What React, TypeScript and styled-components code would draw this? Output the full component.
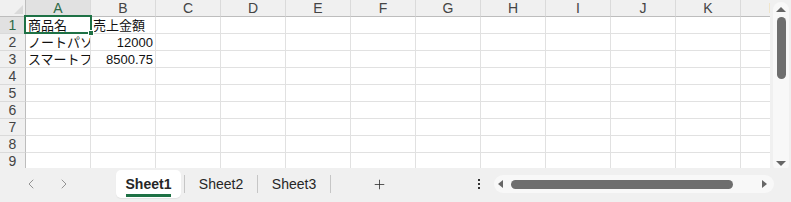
import { FC } from 'react'
import styled, { createGlobalStyle } from 'styled-components'
import { ChevronLeft, ChevronRight, Plus } from 'lucide-react'

const GlobalStyle = createGlobalStyle`
  html, body {
    margin: 0;
    padding: 0;
    background: #ffffff;
  }
  * {
    box-sizing: border-box;
  }
`

const FONT = `"Liberation Sans", "Noto Sans CJK JP", sans-serif`
const GREEN = '#1e7145'
const ROW_H = 17
const COL_W = 65
const HEAD_W = 26

const Workbook = styled.div`
  width: 791px;
  height: 202px;
  display: flex;
  flex-direction: column;
  font-family: ${FONT};
  background: #f0f0f0;
  overflow: hidden;
`

const Main = styled.div`
  display: flex;
  height: 170px;
`

const GridViewport = styled.div`
  position: relative;
  width: 770px;
  height: 170px;
  overflow: hidden;
  background: #ffffff;
`

const Grid = styled.div`
  display: grid;
  grid-template-columns: ${HEAD_W}px repeat(12, ${COL_W}px);
  grid-auto-rows: ${ROW_H}px;
`

const Corner = styled.div`
  position: relative;
  background: #f0f0f0;
  border-right: 1px solid #bdbdbd;
  border-bottom: 1px solid #bdbdbd;

  &::after {
    content: '';
    position: absolute;
    right: 2px;
    bottom: 2px;
    border-left: 9px solid transparent;
    border-bottom: 9px solid #dadada;
  }
`

const ColHeader = styled.div<{ $selected?: boolean }>`
  background: ${({ $selected }) => ($selected ? '#e1e1e1' : '#f0f0f0')};
  color: ${({ $selected }) => ($selected ? '#2d6a47' : '#444444')};
  border-right: 1px solid #dadada;
  border-bottom: 1px solid #bdbdbd;
  font-size: 14px;
  line-height: 16px;
  text-align: center;
`

const RowHeader = styled.div<{ $selected?: boolean }>`
  background: ${({ $selected }) => ($selected ? '#e1e1e1' : '#f0f0f0')};
  color: ${({ $selected }) => ($selected ? '#2d6a47' : '#444444')};
  border-right: 1px solid #bdbdbd;
  border-bottom: 1px solid #dadada;
  font-size: 14px;
  line-height: 17px;
  text-align: center;
`

const Cell = styled.div<{ $align?: 'left' | 'right' }>`
  border-right: 1px solid #e1e1e1;
  border-bottom: 1px solid #e1e1e1;
  font-size: 13px;
  line-height: 17px;
  color: #111111;
  padding: 0 2px;
  white-space: nowrap;
  overflow: hidden;
  text-align: ${({ $align }) => $align ?? 'left'};
`

/* active-cell frame drawn over the grid */
const Selection = styled.div`
  position: absolute;
  z-index: 5;
  border: 2px solid ${GREEN};
  pointer-events: none;
`

const FillHandle = styled.div`
  position: absolute;
  right: -4px;
  bottom: -4px;
  width: 6px;
  height: 6px;
  background: ${GREEN};
  border: 1px solid #ffffff;
`

const VScroll = styled.div`
  width: 21px;
  height: 172px;
  padding: 2px 2px 0 3px;
  background: #f0f0f0;
`

const VTrack = styled.div`
  height: 100%;
  border-radius: 8px;
  background: #f8f8f8;
  display: flex;
  flex-direction: column;
  align-items: center;
  padding: 5px 0 6px;
`

const VThumb = styled.div`
  width: 9px;
  height: 62px;
  margin-top: 5px;
  border-radius: 5px;
  background: #6e6e6e;
`

const Spacer = styled.div`
  flex: 1;
`

const Triangle = styled.div<{ $dir: 'up' | 'down' | 'left' | 'right' }>`
  width: 0;
  height: 0;
  ${({ $dir }) =>
    $dir === 'up'
      ? 'border-left: 5px solid transparent; border-right: 5px solid transparent; border-bottom: 5px solid #666;'
      : $dir === 'down'
        ? 'border-left: 5px solid transparent; border-right: 5px solid transparent; border-top: 5px solid #666;'
        : $dir === 'left'
          ? 'border-top: 4px solid transparent; border-bottom: 4px solid transparent; border-right: 5px solid #666;'
          : 'border-top: 4px solid transparent; border-bottom: 4px solid transparent; border-left: 5px solid #666;'}
`

const BottomBar = styled.div`
  height: 32px;
  display: flex;
  align-items: center;
  margin-top: -2px;
  background: #f0f0f0;
  position: relative;
`

const NavButton = styled.div`
  width: 33px;
  display: flex;
  justify-content: center;
  color: #8c8c8c;
`

const NavGroup = styled.div`
  display: flex;
  padding-left: 14px;
  width: 116px;
  align-self: stretch;
  align-items: center;
`

const Tabs = styled.div`
  display: flex;
  align-items: center;
  align-self: stretch;
`

const Tab = styled.div<{ $active?: boolean }>`
  position: relative;
  height: ${({ $active }) => ($active ? '28px' : 'auto')};
  align-self: ${({ $active }) => ($active ? 'flex-start' : 'center')};
  width: ${({ $active }) => ($active ? '65px' : '72px')};
  margin-right: ${({ $active }) => ($active ? '3px' : '0')};
  margin-top: ${({ $active }) => ($active ? '2px' : '0')};
  display: flex;
  justify-content: center;
  align-items: center;
  font-size: 14px;
  font-weight: ${({ $active }) => ($active ? 700 : 400)};
  color: #262626;
  background: ${({ $active }) => ($active ? '#ffffff' : 'transparent')};
  border-radius: 5px;
  box-shadow: ${({ $active }) => ($active ? '0 1px 1px rgba(0,0,0,0.06)' : 'none')};
`

const TabLabel = styled.span<{ $active?: boolean }>`
  position: relative;
  padding-bottom: ${({ $active }) => ($active ? '2px' : '0')};
  border-bottom: ${({ $active }) => ($active ? `3px solid ${GREEN}` : 'none')};
  margin-top: ${({ $active }) => ($active ? '4px' : '0')};
  line-height: 16px;
`

const TabSeparator = styled.div`
  width: 1px;
  height: 18px;
  background: #c6c6c6;
`

const AddSheet = styled.div`
  margin-left: 41px;
  display: flex;
  color: #333333;
`

const MoreDots = styled.div`
  margin-left: 91px;
  display: flex;
  flex-direction: column;
  gap: 2px;
  width: 2px;

  span {
    width: 2px;
    height: 2px;
    background: #333;
  }
`

const HScroll = styled.div`
  margin-left: 14px;
  width: 280px;
  height: 18px;
  border-radius: 9px;
  background: #f8f8f8;
  display: flex;
  align-items: center;
  padding: 0 7px 0 4px;
`

const HThumb = styled.div`
  width: 222px;
  height: 9px;
  margin-left: 8px;
  border-radius: 5px;
  background: #6e6e6e;
`

const columns = ['A', 'B', 'C', 'D', 'E', 'F', 'G', 'H', 'I', 'J', 'K', 'L']

type CellValue = { text: string; align?: 'left' | 'right' }

const data: Record<number, CellValue[]> = {
  1: [{ text: '商品名' }, { text: '売上金額' }],
  2: [{ text: 'ノートパソコン' }, { text: '12000', align: 'right' }],
  3: [{ text: 'スマートフォン' }, { text: '8500.75', align: 'right' }],
}

const rows = [1, 2, 3, 4, 5, 6, 7, 8, 9]

const active = { row: 1, col: 0 }

const RowCells: FC<{ row: number }> = ({ row }) => (
  <>
    <RowHeader $selected={row === active.row}>{row}</RowHeader>
    {columns.map((c, i) => {
      const value = data[row]?.[i]
      return (
        <Cell key={c} $align={value?.align}>
          {value?.text}
        </Cell>
      )
    })}
  </>
)

const SheetGrid: FC = () => (
  <GridViewport>
    <Grid>
      <Corner />
      {columns.map((c, i) => (
        <ColHeader key={c} $selected={i === active.col}>
          {c}
        </ColHeader>
      ))}
      {rows.map((r) => (
        <RowCells key={r} row={r} />
      ))}
    </Grid>
    <Selection
      style={{
        left: HEAD_W + active.col * COL_W - 2,
        top: active.row * ROW_H - 2,
        width: COL_W + 3,
        height: ROW_H + 2,
      }}
    >
      <FillHandle />
    </Selection>
  </GridViewport>
)

export default function App() {
  return (
    <>
      <GlobalStyle />
      <Workbook>
        <Main>
          <SheetGrid />
          <VScroll>
            <VTrack>
              <Triangle $dir='up' />
              <VThumb />
              <Spacer />
              <Triangle $dir='down' />
            </VTrack>
          </VScroll>
        </Main>
        <BottomBar>
          <NavGroup>
            <NavButton>
              <ChevronLeft size={16} strokeWidth={1.4} />
            </NavButton>
            <NavButton>
              <ChevronRight size={16} strokeWidth={1.4} />
            </NavButton>
          </NavGroup>
          <Tabs>
            <Tab $active>
              <TabLabel $active>Sheet1</TabLabel>
            </Tab>
            <TabSeparator />
            <Tab>
              <TabLabel>Sheet2</TabLabel>
            </Tab>
            <TabSeparator />
            <Tab>
              <TabLabel>Sheet3</TabLabel>
            </Tab>
            <TabSeparator />
          </Tabs>
          <AddSheet>
            <Plus size={15} strokeWidth={1.3} />
          </AddSheet>
          <MoreDots>
            <span />
            <span />
            <span />
          </MoreDots>
          <HScroll>
            <Triangle $dir='left' />
            <HThumb />
            <Spacer />
            <Triangle $dir='right' />
          </HScroll>
        </BottomBar>
      </Workbook>
    </>
  )
}
